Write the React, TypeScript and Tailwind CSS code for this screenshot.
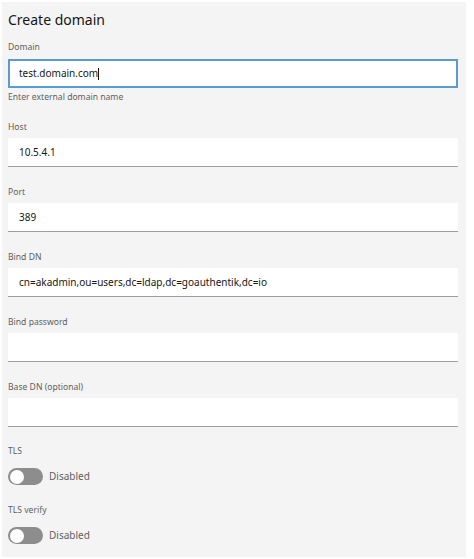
import React from 'react';

const font = { fontFamily: '"Noto Sans", "Open Sans", sans-serif' };

const Field: React.FC<{ label: string; value?: string }> = ({ label, value }) => (
  <div className="flex flex-col">
    <label className="text-[8.6px] leading-4 text-[#5f5f5f]">{label}</label>
    <div className="mt-[3px] h-[29px] bg-white border-b border-[#9e9e9e] flex items-center pl-[11px] text-[10px] text-[#161616]">
      {value}
    </div>
  </div>
);

const Toggle: React.FC<{ label: string }> = ({ label }) => (
  <div className="flex flex-col">
    <label className="text-[8.6px] leading-4 text-[#5f5f5f]">{label}</label>
    <div className="mt-[9px] flex items-center gap-[6px]">
      <div className="w-[35px] h-[17px] rounded-full bg-[#8d8d8d] flex items-center px-[1.5px]">
        <div className="w-[14px] h-[14px] rounded-full bg-white" />
      </div>
      <span className="text-[10px] text-[#5f5f5f]">Disabled</span>
    </div>
  </div>
);

export default function App() {
  return (
    <div className="w-[474px] h-[559px] bg-white pt-[2px] pl-[2px] pr-[8px] pb-[2px]" style={font}>
      <div className="h-full bg-[#f4f4f4] pl-[6px] pr-[8px] pt-[6px] flex flex-col">
        <h1 className="text-[14px] leading-6 text-[#161616]">Create domain</h1>

        <div className="mt-[7px] flex flex-col">
          <label className="text-[8.6px] leading-4 text-[#5f5f5f]">Domain</label>
          <div className="mt-[4px] h-[29px] bg-white border-2 border-[#5b9bd5] flex items-center pl-[9px] text-[10px] text-[#161616]">
            test.domain.com
            <span className="w-px h-[12px] bg-[#161616]" />
          </div>
          <span className="text-[8.6px] leading-4 text-[#5f5f5f] mt-[1px]">Enter external domain name</span>
        </div>

        <div className="mt-[14px] flex flex-col gap-[17px]">
          <Field label="Host" value="10.5.4.1" />
          <Field label="Port" value="389" />
          <Field label="Bind DN" value="cn=akadmin,ou=users,dc=ldap,dc=goauthentik,dc=io" />
          <Field label="Bind password" />
          <Field label="Base DN (optional)" />
        </div>

        <div className="mt-[16px] flex flex-col gap-[17px]">
          <Toggle label="TLS" />
          <Toggle label="TLS verify" />
        </div>
      </div>
    </div>
  );
}
